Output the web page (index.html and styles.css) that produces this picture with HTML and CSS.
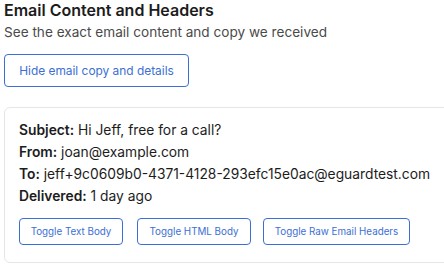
FILE: index.html
```html
<!DOCTYPE html>
<html>
<head>
<meta charset="utf-8">
<link rel="stylesheet" href="styles.css">
</head>
<body>
<div class="page">
  <h2 class="title">Email Content and Headers</h2>
  <p class="subtitle">See the exact email content and copy we received</p>
  <button class="btn btn-main">Hide email copy and details</button>
  <div class="card">
    <div class="row"><b>Subject:</b> Hi Jeff, free for a call?</div>
    <div class="row"><b>From:</b> joan@example.com</div>
    <div class="row"><b>To:</b> jeff+9c0609b0-4371-4128-293efc15e0ac@eguardtest.com</div>
    <div class="row"><b>Delivered:</b> 1 day ago</div>
    <div class="actions">
      <button class="btn btn-small btn-text">Toggle Text Body</button>
      <button class="btn btn-small btn-html">Toggle HTML Body</button>
      <button class="btn btn-small btn-raw">Toggle Raw Email Headers</button>
    </div>
  </div>
</div>
</body>
</html>
```
FILE: styles.css
```css
* { box-sizing: border-box; }
html, body { margin: 0; padding: 0; background: #fff; }
body { font-family: "Inter", "Noto Sans", sans-serif; color: #1c1c1c; overflow: hidden; width: 444px; height: 264px; }
.page { padding: 0 0 0 4px; }
.title { margin: 0; font-size: 16px; font-weight: 600; line-height: 20px; }
.subtitle { margin: 3px 0 0; font-size: 13.6px; line-height: 18px; color: #4a4a4a; white-space: nowrap; }
.btn { font-family: inherit; background: #fff; color: #3b6fd4; border: 1px solid #3b6fd4; border-radius: 4px; cursor: pointer; white-space: nowrap; }
.btn-main { margin-top: 13px; height: 33px; width: 185px; font-size: 11.9px; padding: 0; }
.card { margin-top: 20px; width: 470px; border: 1px solid #e6e6e6; border-radius: 6px; padding: 11px 14px 17px; }
.row { font-size: 13.8px; line-height: 22px; color: #1c1c1c; white-space: nowrap; }
.row b { font-weight: 600; }
.actions { display: flex; gap: 13px; margin-top: 11px; }
.btn-small { height: 27px; font-size: 9.8px; padding: 0; }
.btn-text { width: 104px; }
.btn-html { width: 114px; margin-left: 1px; }
.btn-raw { width: 147px; margin-left: -1px; }
```
